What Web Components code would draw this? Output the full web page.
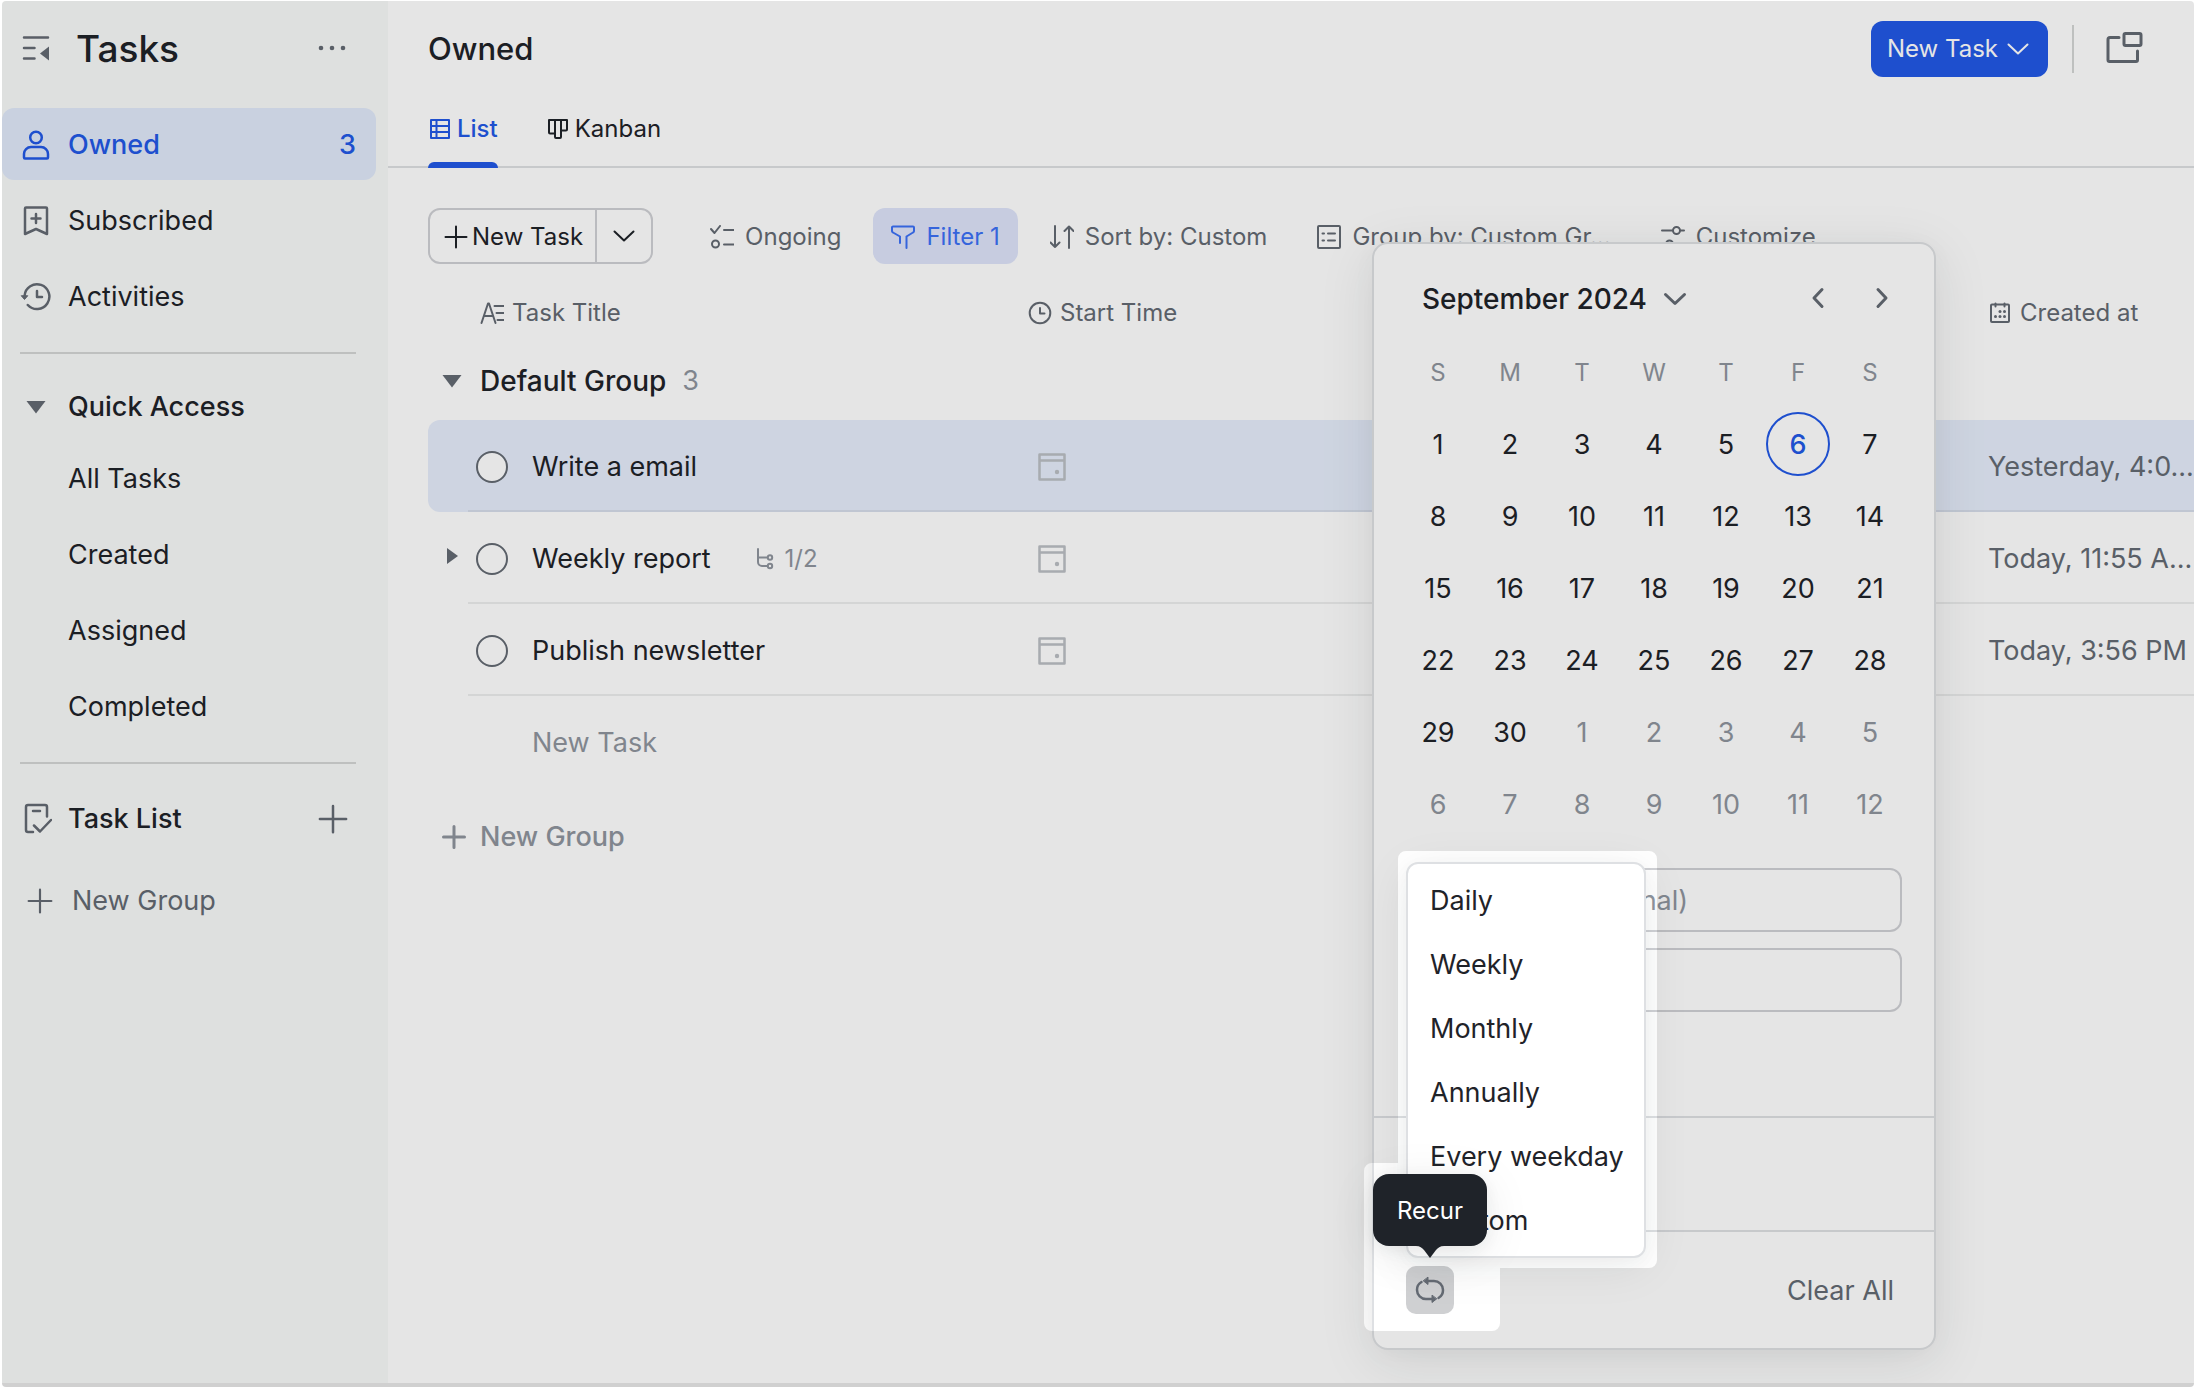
<!DOCTYPE html>
<html lang="en">
<head>
<meta charset="utf-8">
<title>Tasks</title>
<style>
    body {
        margin: 0;
        background: #fff;
        color: #1f2329;
        font-family: Inter, "Liberation Sans", sans-serif;
        font-size: 27px;
        line-height: 36px;
        --blue: #2259e6;
        --grey: #646a73;
        --light: #8f959e;
        --line: #dee0e3;
    }
</style>
</head>
<body>
<task-app></task-app>

<script>
const ICONS = {
    collapse: [32, '<path d="M4 4.5h24M4 15h10.5M4 25.5h10.5"/><path d="M20 20.5l9-7v14z" fill="currentColor" stroke="none"/>'],
    user: [32, '<circle cx="16" cy="8.5" r="5.8"/><path d="M4 28.5V25a7 7 0 0 1 7-7h10a7 7 0 0 1 7 7v3.5a1 1 0 0 1-1 1H5a1 1 0 0 1-1-1z"/>'],
    bookmark: [32, '<path d="M5 3.5a1 1 0 0 1 1-1h20a1 1 0 0 1 1 1V29l-11-5-11 5z"/><path d="M16 9v9M11.500 13.500h9"/>'],
    history: [32, '<path d="M4.600 14.500a12.400 12.400 0 1 1 3.200 9.500"/><path d="M17 10v6h5"/><path d="M1.500 15l3 3.500 3-3.500z" fill="currentColor" stroke-width="1"/>'],
    more: [32, '<g fill="currentColor" stroke="none"><circle cx="5" cy="15" r="2.300"/><circle cx="16" cy="15" r="2.300"/><circle cx="27" cy="15" r="2.300"/></g>'],
    tasklist: [32, '<path d="M27 13.500V4a2 2 0 0 0-2-2H8a2 2 0 0 0-2 2v23a2 2 0 0 0 2 2h5M13 8h7M14 22.500l6 6 11-11.500"/>'],
    plus: [24, '<path d="M12 1.500v21M1.500 12h21"/>'],
    down: [24, '<path d="M2.500 7.500l9.500 9 9.500-9"/>'],
    left: [24, '<path d="M16 3.500L8 12l8 8.500"/>'],
    right: [24, '<path d="M8 3.500l8 8.500-8 8.500"/>'],
    caretDown: [24, '<path d="M2.500 6h19L12 18.500z" fill="currentColor" stroke="none"/>'],
    caretRight: [24, '<path d="M7 4l11 8-11 8z" fill="currentColor" stroke="none"/>'],
    list: [24, '<path d="M3 3h18v18H3zM3 9h18M3 15h18M8.500 3v18"/>'],
    kanban: [24, '<path d="M9 16.500H4a1 1 0 0 1-1-1V3h18v9.500a1 1 0 0 1-1 1h-5M9 3v17a1 1 0 0 0 1 1h4a1 1 0 0 0 1-1V3"/>'],
    ongoing: [24, '<path d="M1 4l3.500 4L10 1M14 5h9.500M14 19.500h9.500"/><circle cx="5.500" cy="19" r="3.500"/>'],
    filter: [24, '<path d="M9 18v-6.500L2 7.500a1.500 1.500 0 0 1-1-1.500V2.500a1 1 0 0 1 1-1h20a1 1 0 0 1 1 1V6a1.500 1.500 0 0 1-1 1.500l-6.500 4V23"/>'],
    sort: [24, '<path d="M5 1v21M.5 17.500L5 22l4.500-4.500M19 23V1.500M14.500 6L19 1.500 23.500 6"/>'],
    group: [24, '<rect x="1" y="1" width="22" height="22" rx="1"/><path d="M11 8.500h7M11 15.500h7M5.500 8.500h1.500M5.500 15.500h1.500"/>'],
    sliders: [24, '<path d="M1 5.500h11M19 5.500h4M23 19h-11M5 19H1"/><circle cx="15.500" cy="5.500" r="3.500"/><circle cx="8.500" cy="19" r="3.500"/>'],
    text: [24, '<path d="M1.500 22L8 2.500h1L15.500 22M4 15h9M14.500 5h9M16.500 12h7M17.500 19h6"/>'],
    clock: [24, '<circle cx="12" cy="12" r="10.300"/><path d="M12 7v5.500h4.500"/>'],
    created: [24, '<rect x="3" y="3.500" width="18" height="17.500" rx="1"/><path d="M7.500 2.500v3M16.500 2.500v3"/><g fill="currentColor" stroke="none"><circle cx="12" cy="10.500" r="1.500"/><circle cx="16.500" cy="10.500" r="1.500"/><circle cx="7.500" cy="15.500" r="1.500"/><circle cx="12" cy="15.500" r="1.500"/><circle cx="16.500" cy="15.500" r="1.500"/></g>'],
    date: [32, '<path d="M3.500 3.500h25v25h-25zM3.500 9.500h25"/><circle cx="21" cy="21" r="2.200" fill="currentColor" stroke="none"/>'],
    subtask: [24, '<path d="M5 2v13a4 4 0 0 0 4 4h5M5 10.500h9"/><circle cx="17" cy="10.500" r="2.200"/><circle cx="17" cy="19" r="2.200"/>'],
    recur: [32, '<path d="M7.500 8A9 9 0 0 0 3 16a9 9 0 0 0 9 9h6M24.500 24A9 9 0 0 0 29 16a9 9 0 0 0-9-9h-6"/><path d="M14 3.500v7L9.500 7zM18 21.500v7l4.500-3.500z" fill="currentColor" stroke-width="1"/>'],
    popout: [40, '<path d="M15 8.500H6a2 2 0 0 0-2 2V31a1.500 1.500 0 0 0 1.500 1.500H32a1.500 1.500 0 0 0 1.500-1.500V22"/><rect x="20" y="4.500" width="17" height="12" rx="1.500"/>', 3]
};

function define(name, markup, setup) {
    const template = document.createElement('template');
    template.innerHTML = markup;
    customElements.define(name, class extends HTMLElement {
        constructor() {
            super();
            this.attachShadow({ mode: 'open' }).appendChild(template.content.cloneNode(true));
        }

        connectedCallback() {
            if (setup) setup(this, this.shadowRoot);
        }
    });
}

const RESET = `
    * { box-sizing: border-box; }
    button, input { font: inherit; color: inherit; }
    button { border: 0; padding: 0; margin: 0; background: none; cursor: pointer; }
    a { color: inherit; text-decoration: none; }
    h1, h2 { margin: 0; font-weight: 500; }
`;

define('ui-icon', `
    <style>
        :host { display: block; flex: none; }
        svg { display: block; }
    </style>
`, (host, root) => {
    const [size, shape, stroke] = ICONS[host.getAttribute('name')];
    const width = host.getAttribute('size') || size;
    const weight = host.getAttribute('stroke') || stroke || (size > 24 ? 2.5 : 2);
    root.innerHTML += `<svg width="${width}" height="${width}" viewBox="0 0 ${size} ${size}" fill="none" stroke="currentColor" stroke-width="${weight}" stroke-linecap="round" stroke-linejoin="round" aria-hidden="true">${shape}</svg>`;
});

define('nav-item', `
    <style>
        ${RESET}
        :host { display: block; margin-right: 12px; }
        a { display: flex; align-items: center; gap: 16px; height: 72px; padding: 2px 20px 0 18px; border-radius: 12px; }
        .label { flex: 1; }
        ::slotted(ui-icon) { color: var(--grey); }
        .icon { width: 32px; display: flex; justify-content: center; }
        :host([active]) a { background: #e0e9fa; color: var(--blue); font-weight: 500; }
        :host([active]) ::slotted(ui-icon) { color: var(--blue); }
        :host([heading]) { font-weight: 500; }
        :host([indent]) a { padding-left: 22px; color: var(--grey); }
    </style>
    <a href="#"><span class="icon"><slot name="icon"></slot></span><span class="label"><slot></slot></span><slot name="end"></slot></a>
`);

define('side-nav', `
    <style>
        ${RESET}
        :host { display: block; background: #f8faf9; }
        header { display: flex; align-items: center; height: 96px; margin-bottom: 11px; padding: 0 40px 0 18px; color: var(--grey); }
        h1 { flex: 1; margin-left: 24px; color: #1f2329; font-size: 37px; line-height: 48px; }
        nav { display: flex; flex-direction: column; gap: 4px; }
        hr { height: 2px; margin: 20px 32px 16px 18px; border: 0; background: #d4d6d5; }
        .row { display: flex; align-items: center; height: 76px; padding: 2px 40px 0 18px; gap: 16px; color: var(--grey); }
        .row h2 { flex: 1; color: #1f2329; font-size: 27px; }
        .row + nav-item { margin-top: 8px; }
    </style>
    <header>
        <button aria-label="Collapse"><ui-icon name="collapse"></ui-icon></button>
        <h1>Tasks</h1>
        <button aria-label="More"><ui-icon name="more"></ui-icon></button>
    </header>
    <nav>
        <nav-item active><ui-icon slot="icon" name="user"></ui-icon>Owned<span slot="end">3</span></nav-item>
        <nav-item><ui-icon slot="icon" name="bookmark"></ui-icon>Subscribed</nav-item>
        <nav-item><ui-icon slot="icon" name="history"></ui-icon>Activities</nav-item>
    </nav>
    <hr>
    <nav-item heading><ui-icon slot="icon" name="caretDown"></ui-icon>Quick Access</nav-item>
    <nav>
        <nav-item>All Tasks</nav-item>
        <nav-item>Created</nav-item>
        <nav-item>Assigned</nav-item>
        <nav-item>Completed</nav-item>
    </nav>
    <hr>
    <div class="row">
        <ui-icon name="tasklist"></ui-icon>
        <h2>Task List</h2>
        <button aria-label="Add task list"><ui-icon name="plus" size="30"></ui-icon></button>
    </div>
    <nav-item indent><ui-icon slot="icon" name="plus" size="26"></ui-icon>New Group</nav-item>
`);

define('page-header', `
    <style>
        ${RESET}
        :host { display: flex; align-items: center; height: 96px; padding: 0 50px 0 40px; }
        h1 { flex: 1; font-size: 31px; line-height: 40px; }
        .primary { display: flex; align-items: center; gap: 8px; height: 56px; padding: 0 18px 0 16px; border-radius: 12px; background: var(--blue); color: #fff; font-size: 24px; }
        .rule { width: 2px; height: 48px; margin: 0 30px 0 24px; background: #d4d6d5; }
        .plain { color: var(--grey); }
    </style>
    <h1>Owned</h1>
    <button class="primary">New Task<ui-icon name="down"></ui-icon></button>
    <span class="rule"></span>
    <button class="plain" aria-label="Open in new window"><ui-icon name="popout"></ui-icon></button>
`);

define('view-tab', `
    <style>
        ${RESET}
        :host { display: block; font-size: 24px; }
        button { display: flex; flex-direction: column; justify-content: space-between; height: 71px; }
        .label { display: flex; align-items: center; gap: 5px; height: 62px; padding-top: 2px; }
        :host([active]) { color: var(--blue); font-weight: 500; }
        :host([active]) button::after { content: ""; width: 100%; height: 6px; border-radius: 6px 6px 0 0; background: var(--blue); }
    </style>
    <button><span class="label"><slot></slot></span></button>
`);

define('tool-chip', `
    <style>
        ${RESET}
        :host { display: block; color: var(--grey); font-size: 24px; }
        button { display: flex; align-items: center; gap: 11px; height: 56px; padding: 2px 18px 0; border-radius: 12px; white-space: nowrap; }
        :host([active]) { color: #3c70f5; }
        :host([active]) button { background: #dee4fa; }
    </style>
    <button><slot></slot></button>
`);

define('task-toolbar', `
    <style>
        ${RESET}
        :host { display: flex; gap: 14px; padding: 40px 40px 20px; }
        .split { display: flex; height: 56px; margin-right: 25px; border: 2px solid #d0d1d5; border-radius: 12px; font-size: 24px; }
        .split button { display: flex; align-items: center; gap: 4px; padding: 2px 12px 0 14px; white-space: nowrap; }
        .split button + button { padding: 0 15px; border-left: 2px solid #d0d1d5; }
    </style>
    <div class="split">
        <button><ui-icon name="plus"></ui-icon>New Task</button>
        <button aria-label="More ways to add"><ui-icon name="down"></ui-icon></button>
    </div>
    <tool-chip><ui-icon name="ongoing"></ui-icon>Ongoing</tool-chip>
    <tool-chip active><ui-icon name="filter"></ui-icon>Filter 1</tool-chip>
    <tool-chip><ui-icon name="sort"></ui-icon>Sort by: Custom</tool-chip>
    <tool-chip><ui-icon name="group"></ui-icon>Group by: Custom Gr...</tool-chip>
    <tool-chip><ui-icon name="sliders"></ui-icon>Customize</tool-chip>
`);

const TASKS = [
    { title: 'Write a email', created: 'Yesterday, 4:0...', selected: true },
    { title: 'Weekly report', created: 'Today, 11:55 A...', subtasks: '1/2' },
    { title: 'Publish newsletter', created: 'Today, 3:56 PM' }
];

define('task-table', `
    <style>
        ${RESET}
        :host { display: block; padding-left: 40px; }
        table { width: 100%; table-layout: fixed; border-collapse: separate; border-spacing: 0; }
        .toggle { width: 40px; }
        .title { width: 548px; }
        .created { width: 218px; }
        th, td { padding: 2px 0 0 12px; text-align: left; font-weight: 400; }
        thead th { height: 56px; color: var(--grey); font-size: 24px; }
        thead th:first-child { padding: 0; }
        .cell { display: flex; align-items: center; gap: 8px; }
        .group th { height: 80px; font-size: 28px; font-weight: 500; }
        .group .cell { gap: 16px; }
        .group ui-icon { color: var(--grey); }
        .count { color: var(--light); font-size: 27px; font-weight: 400; }
        .task td { height: 92px; box-shadow: inset 0 -2px rgba(31, 35, 41, .08); }
        .task td:first-child { box-shadow: none; color: var(--grey); }
        .task .name { padding-left: 8px; }
        .name label { margin-left: 16px; }
        .sub { display: flex; align-items: center; gap: 8px; margin-left: 34px; color: var(--light); font-size: 24px; }
        .task .date { padding-left: 20px; color: #bbbfc4; }
        .task .when { color: var(--grey); white-space: nowrap; }
        .selected td { background: #e6edfb; }
        .selected td:first-child { border-radius: 12px 0 0 12px; }
        input { appearance: none; width: 32px; height: 32px; margin: 0; border: 2px solid var(--grey); border-radius: 50%; background: #fff; }
        .new td { height: 92px; padding-left: 64px; color: var(--light); }
        .new td:first-child { padding-left: 0; }
        .new td:last-child { padding-left: 64px; }
        .add { display: flex; align-items: center; gap: 14px; height: 96px; padding: 2px 0 0 14px; color: var(--light); font-weight: 500; }
    </style>
    <table>
        <colgroup><col class="toggle"><col class="title"><col><col class="created"></colgroup>
        <thead>
            <tr>
                <th></th>
                <th><div class="cell"><ui-icon name="text"></ui-icon>Task Title</div></th>
                <th><div class="cell"><ui-icon name="clock"></ui-icon>Start Time</div></th>
                <th><div class="cell"><ui-icon name="created"></ui-icon>Created at</div></th>
            </tr>
        </thead>
        <tbody>
            <tr class="group">
                <th colspan="4"><div class="cell"><ui-icon name="caretDown"></ui-icon>Default Group <span class="count">3</span></div></th>
            </tr>
        </tbody>
        <tfoot>
            <tr class="new"><td></td><td colspan="3"><button>New Task</button></td></tr>
        </tfoot>
    </table>
    <button class="add"><ui-icon name="plus" stroke="3"></ui-icon>New Group</button>
`, (host, root) => {
    root.querySelector('tbody').insertAdjacentHTML('beforeend', TASKS.map((task, i) => `
        <tr class="task ${task.selected ? 'selected' : ''}">
            <td>${task.subtasks ? '<button aria-label="Expand"><ui-icon name="caretRight"></ui-icon></button>' : ''}</td>
            <td class="name"><div class="cell">
                <input type="checkbox" id="task${i}"><label for="task${i}">${task.title}</label>
                ${task.subtasks ? `<span class="sub"><ui-icon name="subtask"></ui-icon>${task.subtasks}</span>` : ''}
            </div></td>
            <td class="date"><ui-icon name="date"></ui-icon></td>
            <td class="when">${task.created}</td>
        </tr>
    `).join(''));
});

define('recur-menu', `
    <style>
        ${RESET}
        :host { display: block; position: relative; }
        .trigger { display: flex; align-items: center; justify-content: center; width: 48px; height: 48px; border-radius: 10px; background: #cfd0d2; color: var(--grey); }
        .menu { position: absolute; left: 0; bottom: calc(100% + 8px); width: 240px; padding: 4px 0; border: 2px solid var(--line); border-radius: 12px; background: #fff; box-shadow: 0 8px 48px rgba(31, 35, 41, .08), 0 4px 16px rgba(31, 35, 41, .03); }
        .menu button { display: block; width: 100%; height: 64px; padding: 2px 0 0 22px; text-align: left; white-space: nowrap; }
        .tip { position: absolute; left: 50%; bottom: calc(100% + 20px); display: flex; align-items: center; justify-content: center; width: 114px; height: 72px; padding-top: 2px; transform: translateX(-50%); border-radius: 16px; background: #1f2329; box-shadow: 0 8px 48px rgba(31, 35, 41, .08), 0 4px 16px rgba(31, 35, 41, .06); color: #fff; font-size: 24px; }
        .tip svg { position: absolute; top: 100%; }
        /* dims the page except around the menu and its trigger */
        .shade { position: absolute; top: 0; left: 0; overflow: visible; pointer-events: none; }
    </style>
    <button class="trigger" aria-label="Recur"><ui-icon name="recur"></ui-icon></button>
    <div class="menu">
        <button>Daily</button>
        <button>Weekly</button>
        <button>Monthly</button>
        <button>Annually</button>
        <button>Every weekday</button>
        <button>Custom</button>
    </div>
    <div class="tip" role="tooltip">Recur<svg width="28" height="12" fill="#1f2329"><path d="M0 0h28c-4 0-6 2-8 4l-6 8-6-8c-2-2-4-4-8-4z"/></svg></div>
    <svg class="shade" width="1" height="1"><path fill-rule="evenodd" fill-opacity=".1" d="M-6000-6000H6000V6000H-6000zM0-415H243a8 8 0 0 1 8 8V-6a8 8 0 0 1-8 8H94V57a8 8 0 0 1-8 8H-34a8 8 0 0 1-8-8V-95a8 8 0 0 1 8-8H-8V-407a8 8 0 0 1 8-8z"/></svg>
`);

define('date-panel', `
    <style>
        ${RESET}
        :host { display: block; box-sizing: border-box; width: 564px; padding-top: 16px; border: 2px solid var(--line); border-radius: 16px; background: #fff; box-shadow: 0 12px 56px rgba(31, 35, 41, .1), 0 4px 24px rgba(31, 35, 41, .03); }
        header { display: flex; align-items: center; gap: 16px; height: 76px; padding: 0 28px 0 48px; color: var(--grey); }
        .month { display: flex; align-items: center; gap: 16px; margin-right: auto; padding-top: 2px; font-size: 28px; font-weight: 500; color: #1f2329; }
        .month ui-icon { color: var(--grey); }
        .step { display: flex; justify-content: center; width: 48px; }
        table { margin: 0 28px; border-spacing: 0; }
        th, td { width: 72px; height: 72px; padding: 0; text-align: center; }
        th { padding-top: 2px; color: var(--light); font-size: 24px; font-weight: 400; }
        td button { width: 64px; height: 64px; padding-top: 2px; border-radius: 50%; }
        .other { color: var(--light); }
        .today { border: 2px solid var(--blue); color: var(--blue); font-weight: 500; }
        .times { display: grid; gap: 16px; margin: 28px 32px 104px; }
        input { width: 100%; height: 64px; padding: 0 28px; border: 2px solid #d0d1d5; border-radius: 12px; background: transparent; }
        input::placeholder { color: var(--light); opacity: 1; }
        .row { height: 116px; border: solid var(--line); border-width: 2px 0; }
        footer { display: flex; align-items: center; justify-content: space-between; height: 116px; padding: 0 40px 0 32px; }
        .clear { padding-top: 2px; color: var(--grey); }
    </style>
    <header>
        <button class="month">September 2024<ui-icon name="down" stroke="3"></ui-icon></button>
        <button class="step" aria-label="Previous month"><ui-icon name="left" stroke="3"></ui-icon></button>
        <button class="step" aria-label="Next month"><ui-icon name="right" stroke="3"></ui-icon></button>
    </header>
    <table>
        <thead><tr><th>S</th><th>M</th><th>T</th><th>W</th><th>T</th><th>F</th><th>S</th></tr></thead>
        <tbody></tbody>
    </table>
    <div class="times">
        <input aria-label="Start time" placeholder="Start time (optional)">
        <input aria-label="Reminder">
    </div>
    <div class="row"></div>
    <footer>
        <recur-menu></recur-menu>
        <button class="clear">Clear All</button>
    </footer>
`, (host, root) => {
    let rows = '';
    for (let week = 0; week < 6; week++) {
        rows += '<tr>';
        for (let day = week * 7 + 1; day <= week * 7 + 7; day++) {
            const cls = day > 30 ? 'other' : day === 6 ? 'today' : '';
            rows += `<td><button class="${cls}">${day > 30 ? day - 30 : day}</button></td>`;
        }
        rows += '</tr>';
    }
    root.querySelector('tbody').innerHTML = rows;
});

define('task-app', `
    <style>
        ${RESET}
        :host { display: grid; grid-template-columns: 386px minmax(0, 1fr); position: relative; min-height: calc(100vh - 6px); margin: 1px 2px; overflow: hidden; border-bottom: 4px solid #d0d0d0; border-radius: 4px; }
        .tabs { display: flex; gap: 48px; padding-left: 40px; box-shadow: inset 0 -2px var(--line); }
        date-panel { position: absolute; top: 241px; right: 258px; }
    </style>
    <side-nav></side-nav>
    <main>
        <page-header></page-header>
        <div class="tabs">
            <view-tab active><ui-icon name="list"></ui-icon>List</view-tab>
            <view-tab><ui-icon name="kanban"></ui-icon>Kanban</view-tab>
        </div>
        <task-toolbar></task-toolbar>
        <task-table></task-table>
    </main>
    <date-panel></date-panel>
`);
</script>
</body>
</html>
